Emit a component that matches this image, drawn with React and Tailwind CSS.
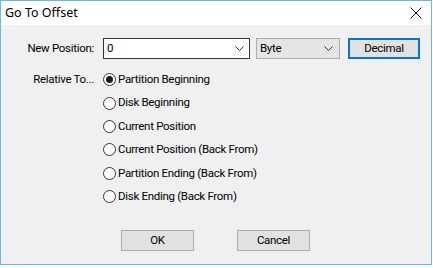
import React from "react";

const font = { fontFamily: 'Roboto, "Noto Sans", sans-serif' };
const titleFont = { fontFamily: '"Noto Sans", sans-serif' };

function Chevron() {
  return (
    <svg width="9" height="5" viewBox="0 0 9 5" className="block">
      <path d="M0.5 0.5 L4.5 4.5 L8.5 0.5" fill="none" stroke="#333" strokeWidth="1" />
    </svg>
  );
}

function Radio({ checked, label }) {
  return (
    <div className="flex h-[23.4px] items-center">
      <span className="flex h-[13px] w-[13px] items-center justify-center rounded-full border border-[#333] bg-white">
        {checked && <span className="h-[7px] w-[7px] rounded-full bg-[#1a1a1a]" />}
      </span>
      <span className="ml-[2px] text-[11.5px] leading-none tracking-[-0.3px] text-black">{label}</span>
    </div>
  );
}

export default function App() {
  const options = [
    ["Partition Beginning", true],
    ["Disk Beginning", false],
    ["Current Position", false],
    ["Current Position (Back From)", false],
    ["Partition Ending (Back From)", false],
    ["Disk Ending (Back From)", false],
  ];
  return (
    <div className="h-[268px] w-[433px] bg-white" style={font}>
      <div className="flex h-[265px] w-[432px] flex-col border border-[#6db6e3]">
        <div className="flex h-[24px] items-center justify-between bg-white pl-[4px] pr-[9px]">
          <span className="text-[12.5px] leading-none text-black" style={titleFont}>Go To Offset</span>
          <svg width="12" height="12" viewBox="0 0 12 12">
            <path d="M0.5 0.5 L11.5 11.5 M11.5 0.5 L0.5 11.5" stroke="#111" strokeWidth="1" />
          </svg>
        </div>
        <div className="flex flex-1 flex-col bg-[#f0f0f0] pt-[13px] text-[11.5px] leading-none tracking-[-0.3px] text-black">
          <div className="flex h-[21px] items-center">
            <div className="w-[93px] text-right">New Position:</div>
            <div className="ml-[9px] flex h-[21px] w-[147px] items-center justify-between border border-[#333] bg-white pl-[3px] pr-[5px]">
              <span>0</span>
              <Chevron />
            </div>
            <div className="ml-[6px] flex h-[21px] w-[84px] items-center justify-between border border-[#adadad] bg-[#e5e5e5] pl-[3px] pr-[6px]">
              <span>Byte</span>
              <Chevron />
            </div>
            <div className="ml-[8px] flex h-[21px] w-[72px] items-center justify-center border-2 border-[#0078d7] bg-[#e1e1e1]">
              Decimal
            </div>
          </div>
          <div className="mt-[9px] flex">
            <div className="flex h-[23.4px] w-[93px] items-center justify-end">Relative To...</div>
            <div className="ml-[9px] flex flex-col">
              {options.map(([l, c]) => (
                <Radio key={l} label={l} checked={c} />
              ))}
            </div>
          </div>
          <div className="mt-[22px] flex justify-center gap-[43px] pr-[1px]">
            <div className="flex h-[21px] w-[73px] items-center justify-center border border-[#adadad] bg-[#e1e1e1]">OK</div>
            <div className="flex h-[21px] w-[73px] items-center justify-center border border-[#adadad] bg-[#e1e1e1]">Cancel</div>
          </div>
        </div>
      </div>
    </div>
  );
}
